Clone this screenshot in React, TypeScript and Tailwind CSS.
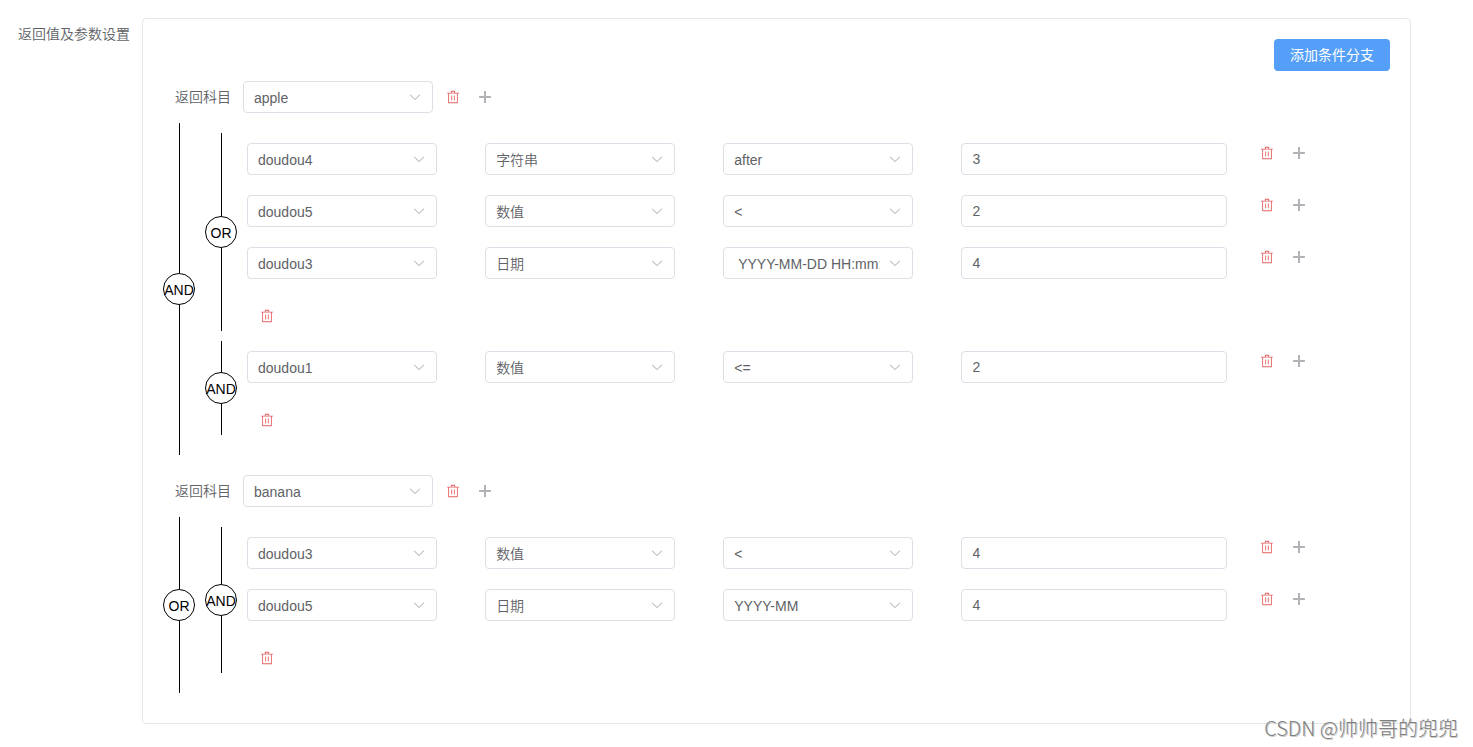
import React, { useState } from 'react'

type Logic = 'AND' | 'OR'

interface Condition {
    field: string
    type: string
    operator: string
    value: string
}

interface Group {
    logic: Logic
    conditions: Condition[]
}

interface Branch {
    subject: string
    logic: Logic
    groups: Group[]
}

const BRANCHES: Branch[] = [
    {
        subject: 'apple',
        logic: 'AND',
        groups: [
            {
                logic: 'OR',
                conditions: [
                    { field: 'doudou4', type: '字符串', operator: 'after', value: '3' },
                    { field: 'doudou5', type: '数值', operator: '<', value: '2' },
                    { field: 'doudou3', type: '日期', operator: '\u00a0YYYY-MM-DD HH:mm:ss', value: '4' },
                ],
            },
            {
                logic: 'AND',
                conditions: [{ field: 'doudou1', type: '数值', operator: '<=', value: '2' }],
            },
        ],
    },
    {
        subject: 'banana',
        logic: 'OR',
        groups: [
            {
                logic: 'AND',
                conditions: [
                    { field: 'doudou3', type: '数值', operator: '<', value: '4' },
                    { field: 'doudou5', type: '日期', operator: 'YYYY-MM', value: '4' },
                ],
            },
        ],
    },
]

function Icon({ d, className }: { d: string; className?: string }) {
    return (
        <svg viewBox="0 0 1024 1024" fill="currentColor" aria-hidden="true" className={className}>
            <path d={d} />
        </svg>
    )
}

const TRASH =
    'M160 256H96a32 32 0 0 1 0-64h256V95.936a32 32 0 0 1 32-32h256a32 32 0 0 1 32 32V192h256a32 32 0 1 1 0 64h-64v672a32 32 0 0 1-32 32H192a32 32 0 0 1-32-32zm448-64v-64H416v64zM224 896h576V256H224zm192-128a32 32 0 0 1-32-32V416a32 32 0 0 1 64 0v320a32 32 0 0 1-32 32m192 0a32 32 0 0 1-32-32V416a32 32 0 0 1 64 0v320a32 32 0 0 1-32 32'
const PLUS =
    'M439 439V80h146v359h359v146H585v359H439V585H80V439z'
const ARROW =
    'M831.872 340.864 512 652.672 192.128 340.864a30.592 30.592 0 0 0-42.752 0 29.12 29.12 0 0 0 0 41.6L489.344 714.24a32 32 0 0 0 44.672 0l340.288-331.712a29.12 29.12 0 0 0 0-41.728 30.592 30.592 0 0 0-42.752 0z'

function DeleteButton({ label }: { label: string }) {
    return (
        <button type="button" aria-label={label} className="text-[#e45f60]">
            <Icon d={TRASH} className="size-[14px]" />
        </button>
    )
}

function AddButton({ label }: { label: string }) {
    return (
        <button type="button" aria-label={label} className="text-[#b1b2b5]">
            <Icon d={PLUS} className="size-[14px]" />
        </button>
    )
}

function Select({ value, id, label }: { value: string; id?: string; label?: string }) {
    return (
        <div className="grid w-[190px] items-center">
            <select
                id={id}
                aria-label={label}
                defaultValue={value}
                className="col-start-1 row-start-1 h-8 w-full appearance-none overflow-hidden rounded border border-[#dcdfe6] bg-white pr-8 pb-0.5 pl-[10px]"
            >
                <option value={value}>{value}</option>
            </select>
            <Icon
                d={ARROW}
                className="pointer-events-none col-start-1 row-start-1 mr-[11px] size-[14px] justify-self-end text-[#a8abb2]"
            />
        </div>
    )
}

// Vertical line with the logic operator in its middle
function Rail({ logic }: { logic: Logic }) {
    return (
        <div className="flex w-8 shrink-0 flex-col items-end text-black">
            <div className="w-4 flex-1 border-l border-black" />
            <button
                type="button"
                className="flex size-8 items-center justify-center rounded-full border border-black pt-0.5"
            >
                {logic}
            </button>
            <div className="w-4 flex-1 border-l border-black" />
        </div>
    )
}

function ConditionRow({ condition }: { condition: Condition }) {
    return (
        <div className="mb-5 grid grid-cols-[5fr_5fr_5fr_6fr_3fr]">
            <Select value={condition.field} label="字段" />
            <Select value={condition.type} label="类型" />
            <Select value={condition.operator} label="运算符" />
            <input
                type="text"
                aria-label="值"
                defaultValue={condition.value}
                className="mr-5 h-8 min-w-0 rounded border border-[#dcdfe6] px-[10px]"
            />
            <div className="flex items-start gap-[18px] pt-[3px] pl-[13px]">
                <DeleteButton label="删除条件" />
                <AddButton label="添加条件" />
            </div>
        </div>
    )
}

function ConditionGroup({ group }: { group: Group }) {
    return (
        <div className="mb-[10px] flex gap-[10px]">
            <Rail logic={group.logic} />
            <div className="flex-1 pt-[10px]">
                {group.conditions.map((condition, i) => (
                    <ConditionRow key={i} condition={condition} />
                ))}
                <div className="flex h-8 items-center pt-0.5 pl-[13px]">
                    <DeleteButton label="删除条件组" />
                </div>
            </div>
        </div>
    )
}

function BranchEditor({ branch, id }: { branch: Branch; id: string }) {
    return (
        <section className="mb-5">
            <div className="mb-[10px] flex items-center">
                <label htmlFor={id} className="px-3">
                    返回科目
                </label>
                <Select id={id} value={branch.subject} />
                <div className="flex gap-[18px] pl-[13px]">
                    <DeleteButton label="删除分支" />
                    <AddButton label="添加条件组" />
                </div>
            </div>
            <div className="flex gap-[10px]">
                <Rail logic={branch.logic} />
                <div className="flex-1 py-[10px]">
                    {branch.groups.map((group, i) => (
                        <ConditionGroup key={i} group={group} />
                    ))}
                </div>
            </div>
        </section>
    )
}

export default function App() {
    const [branches, setBranches] = useState(BRANCHES)

    const addBranch = () => {
        setBranches([...branches, BRANCHES[1]])
    }

    return (
        <div className="relative min-h-screen bg-white font-['Liberation_Sans','Noto_Sans_CJK_SC',sans-serif] text-[14px] leading-8 font-[350] text-[#606266]">
            <main className="flex pt-[18px] pr-[62px] pb-6 pl-[18px]">
                <h1 className="shrink-0 pr-3 font-[350]">返回值及参数设置</h1>
                <div className="flex-1 rounded border border-[#e4e7ed] px-5 pt-5 pb-[10px]">
                    <div className="mb-[10px] flex justify-end">
                        <button
                            type="button"
                            onClick={addBranch}
                            className="h-8 rounded bg-[#559ff8] px-4 font-normal text-white"
                        >
                            添加条件分支
                        </button>
                    </div>
                    {branches.map((branch, i) => (
                        <BranchEditor key={i} branch={branch} id={`subject-${i}`} />
                    ))}
                </div>
            </main>
            <div className="absolute right-[15px] bottom-1 font-['Noto_Sans_CJK_SC',sans-serif] text-[20px] font-light text-[#808080] [text-shadow:1px_1px_0_#cccccc]">
                CSDN @帅帅哥的兜兜
            </div>
        </div>
    )
}
